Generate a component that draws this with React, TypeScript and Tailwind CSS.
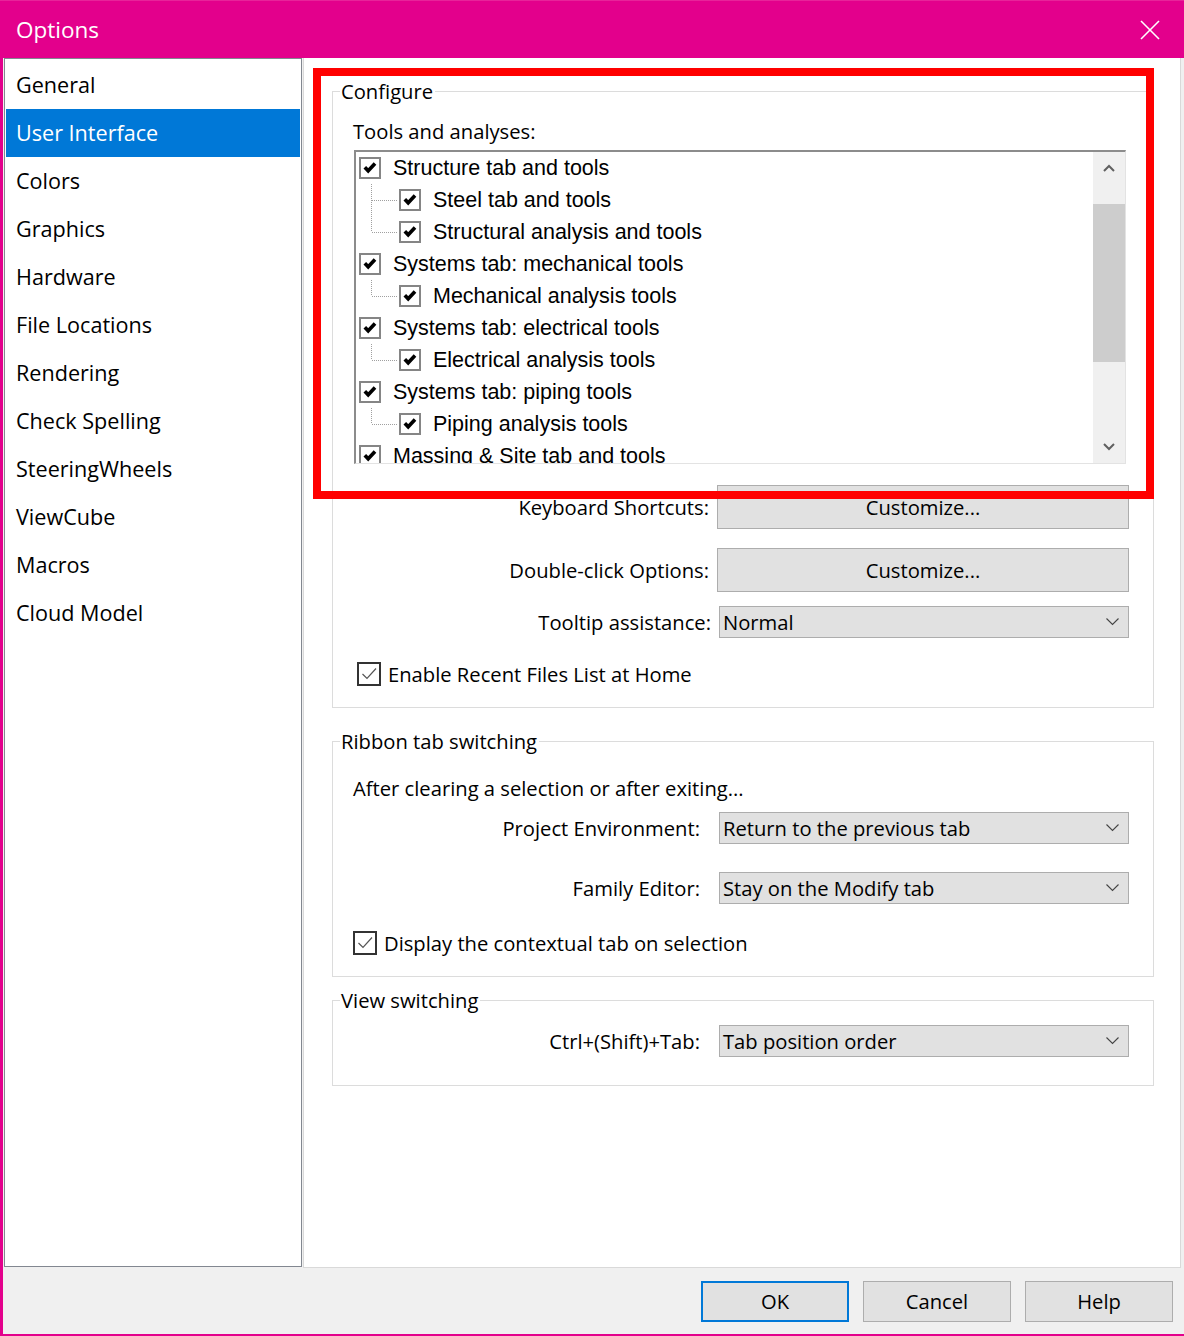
import React from "react";

type TreeItem = { label: string; level: 0 | 1; last?: boolean };

const treeItems: TreeItem[] = [
  { label: "Structure tab and tools", level: 0 },
  { label: "Steel tab and tools", level: 1, last: false },
  { label: "Structural analysis and tools", level: 1, last: true },
  { label: "Systems tab: mechanical tools", level: 0 },
  { label: "Mechanical analysis tools", level: 1, last: true },
  { label: "Systems tab: electrical tools", level: 0 },
  { label: "Electrical analysis tools", level: 1, last: true },
  { label: "Systems tab: piping tools", level: 0 },
  { label: "Piping analysis tools", level: 1, last: true },
  { label: "Massing & Site tab and tools", level: 0 },
];

const navItems = [
  "General",
  "User Interface",
  "Colors",
  "Graphics",
  "Hardware",
  "File Locations",
  "Rendering",
  "Check Spelling",
  "SteeringWheels",
  "ViewCube",
  "Macros",
  "Cloud Model",
];

function TreeCheck() {
  return (
    <div className="w-[22px] h-[22px] border-2 border-[#858585] bg-white flex items-center justify-center shrink-0">
      <svg width="14" height="14" viewBox="0 0 14 14">
        <path d="M1.8 6.2 L5.2 9.8 L12 2.6" fill="none" stroke="#000" strokeWidth="3.6" />
      </svg>
    </div>
  );
}

function Connector({ last }: { last: boolean }) {
  return (
    <svg width="43" height="32" className="shrink-0">
      <line x1="15.5" y1="0" x2="15.5" y2={last ? 16 : 32} stroke="#a0a0a0" strokeDasharray="1 1" />
      <line x1="16" y1="16.5" x2="42" y2="16.5" stroke="#a0a0a0" strokeDasharray="1 1" />
    </svg>
  );
}

function Chevron() {
  return (
    <svg width="13" height="8" viewBox="0 0 13 8" className="shrink-0">
      <polyline points="0.5,0.5 6.5,6.5 12.5,0.5" fill="none" stroke="#444" strokeWidth="1.1" />
    </svg>
  );
}

function Select({ value }: { value: string }) {
  return (
    <div className="w-[410px] h-[32px] bg-[#E1E1E1] border border-[#ADADAD] flex items-center justify-between pl-[3px] pr-[9px]">
      <span className="leading-[30px]">{value}</span>
      <Chevron />
    </div>
  );
}

function WinCheck() {
  return (
    <div className="w-[24px] h-[24px] border-2 border-[#333333] bg-white flex items-center justify-center shrink-0">
      <svg width="20" height="20" viewBox="0 0 20 20">
        <polyline points="3.5,10 8,14.5 17,4.5" fill="none" stroke="#555" strokeWidth="1.2" />
      </svg>
    </div>
  );
}

export default function App() {
  return (
    <div className="relative w-[1184px] h-[1336px] bg-[#E3008C] font-['Open_Sans',sans-serif] text-[20.2px] text-black overflow-hidden">
      {/* Title bar */}
      <div className="h-[58px] flex items-center justify-between pl-[16px] pr-[24px] border-t border-[#E8239A]">
        <span className="text-white text-[22.5px]">Options</span>
        <svg width="20" height="20" viewBox="0 0 20 20">
          <line x1="1" y1="1" x2="19" y2="19" stroke="#fff" strokeWidth="1.6" />
          <line x1="19" y1="1" x2="1" y2="19" stroke="#fff" strokeWidth="1.6" />
        </svg>
      </div>

      {/* Body */}
      <div className="ml-[3px] h-[1276px] bg-[#F0F0F0] flex flex-col">
        <div className="flex h-[1210px]">
          {/* Nav */}
          <nav className="ml-[1px] w-[298px] h-[1209px] border border-[#828790] bg-white pt-[2px] px-[1px] text-[21.6px]">
            {navItems.map((n) => (
              <div
                key={n}
                className={
                  n === "User Interface"
                    ? "h-[48px] leading-[48px] pl-[10px] bg-[#0078D7] text-white"
                    : "h-[48px] leading-[48px] pl-[10px]"
                }
              >
                {n}
              </div>
            ))}
          </nav>

          {/* Main panel */}
          <main className="ml-[1px] w-[878px] h-[1210px] bg-white border-l border-r border-b border-[#d9d9d9] pl-[28px] pt-[19px]">
            {/* Configure */}
            <fieldset className="w-[822px] border border-[#dcdcdc] pb-[21px]">
              <legend className="ml-[7px] pl-[1px] pr-[2px] leading-[28px]">Configure</legend>
              <div className="ml-[20px] mt-[12px] leading-[28px]">Tools and analyses:</div>
              <div className="ml-[21px] mt-[5px] w-[772px] h-[314px] border-t-2 border-l-2 border-r border-b border-t-[#8c8c8c] border-l-[#8c8c8c] border-r-[#e3e3e3] border-b-[#e3e3e3] flex">
                <div className="flex-1 overflow-hidden font-['Liberation_Sans',Arial,sans-serif] text-[21.5px]">
                  {treeItems.map((t) =>
                    t.level === 0 ? (
                      <div key={t.label} className="h-[32px] flex items-center pl-[3px]">
                        <TreeCheck />
                        <span className="ml-[12px] whitespace-nowrap">{t.label}</span>
                      </div>
                    ) : (
                      <div key={t.label} className="h-[32px] flex items-center">
                        <Connector last={!!t.last} />
                        <TreeCheck />
                        <span className="ml-[12px] whitespace-nowrap">{t.label}</span>
                      </div>
                    )
                  )}
                </div>
                <div className="w-[32px] bg-[#F0F0F0] flex flex-col">
                  <div className="h-[32px] flex items-center justify-center">
                    <svg width="12" height="8" viewBox="0 0 12 8">
                      <polyline points="1,7 6,2 11,7" fill="none" stroke="#606060" strokeWidth="2" />
                    </svg>
                  </div>
                  <div className="flex-1">
                    <div className="mt-[20px] h-[158px] bg-[#CDCDCD]" />
                  </div>
                  <div className="h-[32px] flex items-center justify-center">
                    <svg width="12" height="8" viewBox="0 0 12 8">
                      <polyline points="1,1 6,6 11,1" fill="none" stroke="#606060" strokeWidth="2" />
                    </svg>
                  </div>
                </div>
              </div>

              <div className="mt-[21px] flex items-center h-[44px]">
                <div className="w-[376px] text-right">Keyboard Shortcuts:</div>
                <div className="ml-[8px] w-[412px] h-[44px] bg-[#E1E1E1] border border-[#ADADAD] flex items-center justify-center">
                  Customize...
                </div>
              </div>
              <div className="mt-[19px] flex items-center h-[44px]">
                <div className="w-[376px] text-right">Double-click Options:</div>
                <div className="ml-[8px] w-[412px] h-[44px] bg-[#E1E1E1] border border-[#ADADAD] flex items-center justify-center">
                  Customize...
                </div>
              </div>
              <div className="mt-[14px] flex items-center h-[32px]">
                <div className="w-[378px] text-right">Tooltip assistance:</div>
                <div className="ml-[8px]">
                  <Select value="Normal" />
                </div>
              </div>
              <div className="mt-[24px] flex items-center h-[24px] ml-[24px]">
                <WinCheck />
                <span className="ml-[7px]">Enable Recent Files List at Home</span>
              </div>
            </fieldset>

            {/* Ribbon tab switching */}
            <fieldset className="mt-[19px] w-[822px] border border-[#dcdcdc] pb-[21px]">
              <legend className="ml-[7px] pl-[1px] pr-[2px] leading-[28px]">Ribbon tab switching</legend>
              <div className="ml-[20px] mt-[19px] leading-[28px]">After clearing a selection or after exiting...</div>
              <div className="mt-[10px] flex items-center h-[32px]">
                <div className="w-[367px] text-right">Project Environment:</div>
                <div className="ml-[19px]">
                  <Select value="Return to the previous tab" />
                </div>
              </div>
              <div className="mt-[28px] flex items-center h-[32px]">
                <div className="w-[367px] text-right">Family Editor:</div>
                <div className="ml-[19px]">
                  <Select value="Stay on the Modify tab" />
                </div>
              </div>
              <div className="mt-[27px] flex items-center h-[24px] ml-[20px]">
                <WinCheck />
                <span className="ml-[7px]">Display the contextual tab on selection</span>
              </div>
            </fieldset>

            {/* View switching */}
            <fieldset className="mt-[9px] w-[822px] border border-[#dcdcdc] pb-[28px]">
              <legend className="ml-[7px] pl-[1px] pr-[2px] leading-[28px]">View switching</legend>
              <div className="mt-[11px] flex items-center h-[32px]">
                <div className="w-[367px] text-right">Ctrl+(Shift)+Tab:</div>
                <div className="ml-[19px]">
                  <Select value="Tab position order" />
                </div>
              </div>
            </fieldset>
          </main>
        </div>

        {/* Footer */}
        <div className="flex-1 flex justify-end items-start pt-[13px] pr-[11px] gap-[14px]">
          <div className="w-[148px] h-[41px] bg-[#E1E1E1] border-2 border-[#0078D7] flex items-center justify-center">OK</div>
          <div className="w-[148px] h-[41px] bg-[#E1E1E1] border border-[#ADADAD] flex items-center justify-center">Cancel</div>
          <div className="w-[148px] h-[41px] bg-[#E1E1E1] border border-[#ADADAD] flex items-center justify-center">Help</div>
        </div>
      </div>

      {/* Red annotation box */}
      <div className="absolute left-[313px] top-[68px] w-[841px] h-[431px] border-8 border-[#FF0000] pointer-events-none" />
    </div>
  );
}
